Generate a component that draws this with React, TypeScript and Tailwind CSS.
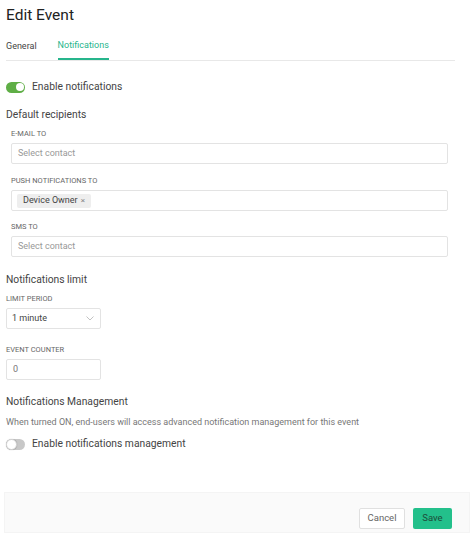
import React from "react";

function Toggle({ on }: { on: boolean }) {
  return on ? (
    <div className="relative w-[19px] h-[11px] rounded-full bg-[#5fae46]">
      <div className="absolute right-[1.5px] top-[1.5px] w-[8px] h-[8px] rounded-full bg-white" />
    </div>
  ) : (
    <div className="relative w-[19px] h-[11px] rounded-full bg-[#c8c8c8]">
      <div className="absolute left-[0px] top-[0px] w-[11px] h-[11px] rounded-full bg-white border border-[#d6d6d6] shadow-[0_0_1px_rgba(0,0,0,0.3)]" />
    </div>
  );
}

function Label({ children }: { children: React.ReactNode }) {
  return <div className="h-[10px] leading-[10px] text-[7.5px] text-[#666]">{children}</div>;
}

export default function App() {
  return (
    <div className="w-[474px] h-[537px] bg-white relative" style={{ fontFamily: "Roboto, 'Liberation Sans', sans-serif" }}>
      <div className="px-[6px] pt-[5px]">
        <div className="h-[20px] leading-[20px] text-[15.5px] text-[#222]">Edit Event</div>
        <div className="mt-[10px] flex h-[26px] w-[449px] border-b border-[#e8e8e8] text-[9px]">
          <div className="flex items-center h-full pb-[2px] text-[#444]">General</div>
          <div className="ml-[21px] flex items-center h-full pb-[2px] text-[#26b58c] border-b-2 border-[#26b58c] -mb-[1px]">Notifications</div>
        </div>
        <div className="mt-[18px] flex items-center h-[16px]">
          <Toggle on />
          <span className="text-[10.3px] text-[#444] pl-[7px]">Enable notifications</span>
        </div>
        <div className="mt-[13px] h-[14px] leading-[14px] text-[10.3px] text-[#444]">Default recipients</div>
        <div className="pl-[5px]">
          <div className="mt-[7px]">
            <Label>E-MAIL TO</Label>
            <div className="mt-[4px] h-[21px] w-[437px] rounded-[2px] border border-[#e3e3e3] flex items-center pl-[6px] text-[9px] text-[#999]">Select contact</div>
          </div>
          <div className="mt-[12px]">
            <Label>PUSH NOTIFICATIONS TO</Label>
            <div className="mt-[4px] h-[21px] w-[437px] rounded-[2px] border border-[#e3e3e3] flex items-center pl-[5px]">
              <div className="h-[14px] px-[6px] bg-[#eeeeee] rounded-[2px] flex items-center text-[9px] text-[#444] gap-[3px]">
                Device Owner <span className="text-[8px] text-[#888]">×</span>
              </div>
            </div>
          </div>
          <div className="mt-[11px]">
            <Label>SMS TO</Label>
            <div className="mt-[4px] h-[21px] w-[437px] rounded-[2px] border border-[#e3e3e3] flex items-center pl-[6px] text-[9px] text-[#999]">Select contact</div>
          </div>
        </div>
        <div className="mt-[16px] h-[14px] leading-[14px] text-[10.3px] text-[#444]">Notifications limit</div>
        <div className="mt-[7px]">
          <Label>LIMIT PERIOD</Label>
          <div className="mt-[4px] h-[21px] w-[95px] rounded-[2px] border border-[#e3e3e3] flex items-center justify-between pl-[5px] pr-[6px] text-[9px] text-[#444]">
            <span>1 minute</span>
            <svg width="8" height="5" viewBox="0 0 8 5" fill="none"><path d="M0.5 0.5L4 4L7.5 0.5" stroke="#bbb" strokeWidth="0.9" /></svg>
          </div>
        </div>
        <div className="mt-[16px]">
          <Label>EVENT COUNTER</Label>
          <div className="mt-[4px] h-[21px] w-[95px] rounded-[2px] border border-[#e3e3e3] flex items-center pl-[6px] text-[9px] text-[#777]">0</div>
        </div>
        <div className="mt-[15px] h-[14px] leading-[14px] text-[10.3px] text-[#444]">Notifications Management</div>
        <div className="mt-[7px] h-[12px] leading-[12px] text-[9px] text-[#777]">When turned ON, end-users will access advanced notification management for this event</div>
        <div className="mt-[8px] flex items-center h-[16px]">
          <Toggle on={false} />
          <span className="text-[10.3px] text-[#444] pl-[7px]">Enable notifications management</span>
        </div>
      </div>
      <div className="absolute left-[4px] top-[492px] w-[466px] h-[41px] bg-[#fafafa] border border-[#f4f4f4] flex justify-end items-start pt-[15px] pr-[17px] gap-[8px]">
        <button className="h-[21px] w-[46px] rounded-[2px] border border-[#e0e0e0] bg-white text-[9.5px] text-[#666]">Cancel</button>
        <button className="h-[21px] w-[39px] rounded-[2px] bg-[#23c08b] text-[9.5px] text-[#1d4d3a]">Save</button>
      </div>
    </div>
  );
}
